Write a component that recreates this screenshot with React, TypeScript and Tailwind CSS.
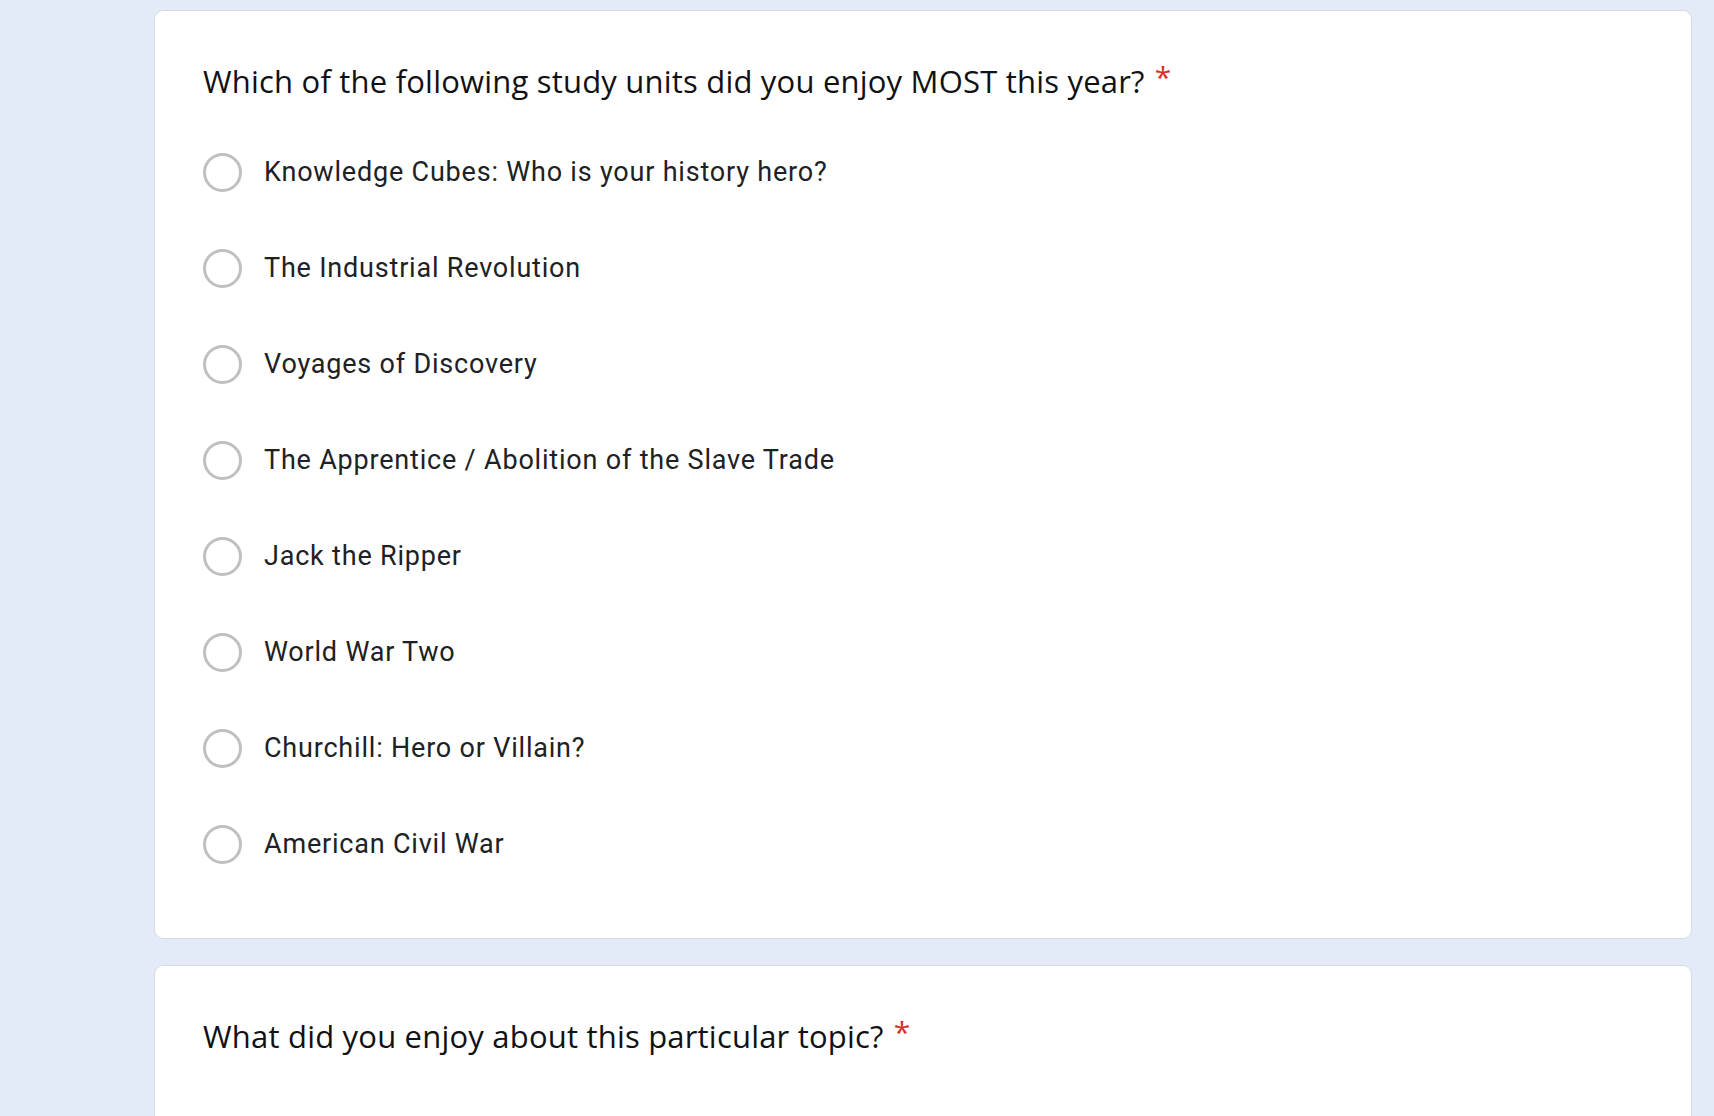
const UNITS = [
  "Knowledge Cubes: Who is your history hero?",
  "The Industrial Revolution",
  "Voyages of Discovery",
  "The Apprentice / Abolition of the Slave Trade",
  "Jack the Ripper",
  "World War Two",
  "Churchill: Hero or Villain?",
  "American Civil War",
];

function QuestionTitle({ text }: { text: string }) {
  return (
    <h2 className="flex h-[40px] items-center font-['Open_Sans',sans-serif] text-[31px] font-medium tracking-[0.2px] text-[#111113]">
      <span>{text}</span>
      <span className="ml-[10px] -mt-[10px] text-[30px] font-normal text-[#d93025]">*</span>
    </h2>
  );
}

function RadioOption({ label }: { label: string }) {
  return (
    <label className="flex h-[96px] cursor-pointer items-center gap-[22px]">
      <span className="h-[39px] w-[39px] shrink-0 rounded-full border-[3.5px] border-[#c0c0c0]" />
      <span className="font-['Roboto',sans-serif] text-[27px] leading-[39px] tracking-[0.8px] text-[#202124]">
        {label}
      </span>
    </label>
  );
}

export default function App() {
  return (
    <div className="min-h-screen overflow-hidden bg-[#e3ebf8] pt-[10px]">
      {/* Question 1 */}
      <div className="ml-[154px] w-[1538px] rounded-[9px] border border-[#d7dbe0] bg-white pl-[48px] pt-[50px] pb-[46px]">
        <QuestionTitle text="Which of the following study units did you enjoy MOST this year?" />
        <div className="mt-[23px] flex flex-col">
          {UNITS.map((u) => (
            <RadioOption key={u} label={u} />
          ))}
        </div>
      </div>

      {/* Question 2 */}
      <div className="ml-[154px] mt-[26px] h-[400px] w-[1538px] rounded-[9px] border border-[#d7dbe0] bg-white pl-[48px] pt-[50px]">
        <QuestionTitle text="What did you enjoy about this particular topic?" />
      </div>
    </div>
  );
}
